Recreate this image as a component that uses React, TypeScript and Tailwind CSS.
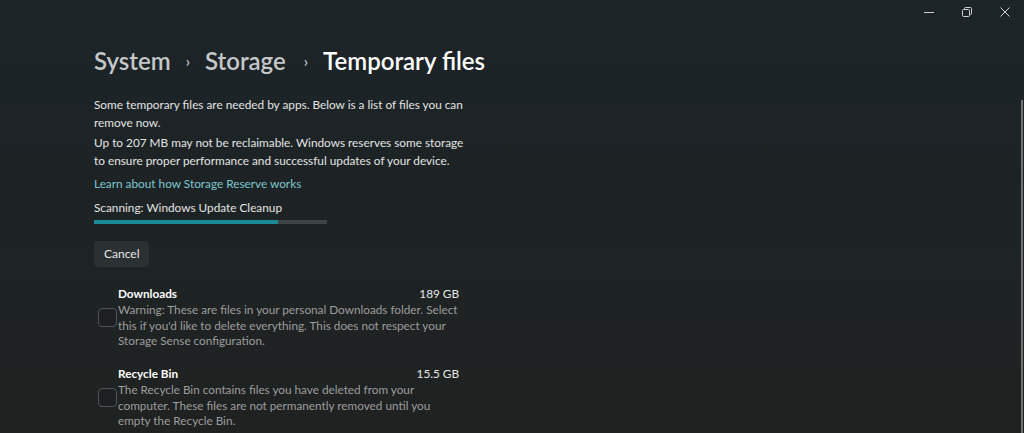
import React from "react";

function Item({ title, size, children }: { title: string; size: string; children: React.ReactNode }) {
  return (
    <div className="flex items-center">
      <div className="w-[24px] flex justify-start pl-[4px]">
        <div className="w-[19px] h-[19px] rounded-[4px] border border-[#4f5354] bg-[#1c2021]" />
      </div>
      <div className="w-[341px]">
        <div className="flex justify-between text-[11.75px] leading-[16px]">
          <span className="font-bold text-white">{title}</span>
          <span className="text-[#e8e8e8]">{size}</span>
        </div>
        <p className="text-[11.75px] leading-[15.5px] text-[#9d9d9d] whitespace-nowrap">{children}</p>
      </div>
    </div>
  );
}

export default function App() {
  return (
    <div
      className="w-[1024px] h-[433px] overflow-hidden relative bg-gradient-to-b from-[#1c2428] to-[#1f2221] text-[#e6e6e6]"
      style={{ fontFamily: 'Lato, sans-serif' }}
    >
      <div className="absolute top-0 right-0 flex text-[#cfcfcf]">
        <div className="w-[38px] h-[24px] flex items-center justify-center">
          <svg width="10" height="10" viewBox="0 0 10 10"><path d="M0 5.5h10" stroke="currentColor" strokeWidth="1" /></svg>
        </div>
        <div className="w-[38px] h-[24px] flex items-center justify-center">
          <svg width="10" height="10" viewBox="0 0 10 10" fill="none" stroke="currentColor" strokeWidth="1">
            <rect x="0.5" y="2.5" width="7" height="7" rx="1" />
            <path d="M2.5 2.5V1.5a1 1 0 0 1 1-1h5a1 1 0 0 1 1 1v5a1 1 0 0 1-1 1h-1" />
          </svg>
        </div>
        <div className="w-[38px] h-[24px] flex items-center justify-center">
          <svg width="10" height="10" viewBox="0 0 10 10"><path d="M0.5 0.5l9 9M9.5 0.5l-9 9" stroke="currentColor" strokeWidth="1" /></svg>
        </div>
      </div>
      <div className="absolute right-[1px] top-[100px] bottom-0 w-[2px] bg-[#707070]" />

      <div className="pl-[94px] pt-[44px]">
        <div className="flex items-center text-[24px] font-semibold leading-[34px]">
          <span className="text-[#c5c7c8]">System</span>
          <span className="text-[#c5c7c8] text-[15px] mx-[15px]">›</span>
          <span className="text-[#c5c7c8]">Storage</span>
          <span className="text-[#c5c7c8] text-[15px] ml-[18px] mr-[15px]">›</span>
          <span className="text-white">Temporary files</span>
        </div>

        <div className="mt-[18px] text-[11.8px] leading-[18px] text-[#e3e3e3] whitespace-nowrap">
          <p>Some temporary files are needed by apps. Below is a list of files you can<br />remove now.</p>
          <p className="mt-[2px]">Up to 207 MB may not be reclaimable. Windows reserves some storage<br />to ensure proper performance and successful updates of your device.</p>
          <p className="mt-[5px] text-[#7fc6cf]">Learn about how Storage Reserve works</p>
          <p className="mt-[6px]">Scanning: Windows Update Cleanup</p>
        </div>
        <div className="w-[233px] h-[4px] bg-[#3e4343] mt-[3px]">
          <div className="w-[184px] h-full bg-[#1c8a97]" />
        </div>
        <button className="mt-[17px] h-[26px] px-[10px] rounded-[4px] bg-[#2b3033] text-[12px] text-[#e6e6e6]">Cancel</button>

        <div className="mt-[19px] flex flex-col gap-[17.5px]">
          <Item title="Downloads" size="189 GB">
            Warning: These are files in your personal Downloads folder. Select<br />
            this if you'd like to delete everything. This does not respect your<br />
            Storage Sense configuration.
          </Item>
          <Item title="Recycle Bin" size="15.5 GB">
            The Recycle Bin contains files you have deleted from your<br />
            computer. These files are not permanently removed until you<br />
            empty the Recycle Bin.
          </Item>
        </div>
      </div>
    </div>
  );
}
